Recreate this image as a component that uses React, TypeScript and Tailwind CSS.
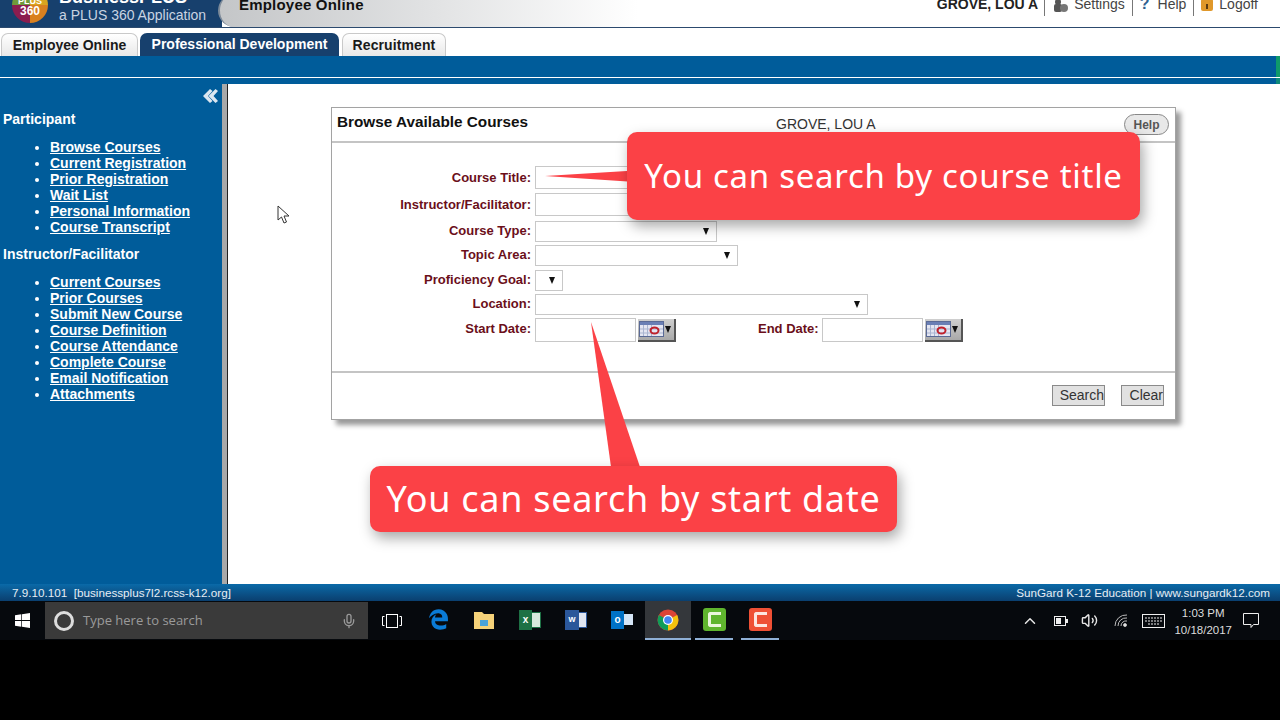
import { FaEdgeLegacy } from "react-icons/fa6";
import { ChevronUp, Mic, Volume2 } from "lucide-react";

const participantLinks = [
  "Browse Courses",
  "Current Registration",
  "Prior Registration",
  "Wait List",
  "Personal Information",
  "Course Transcript",
];

const instructorLinks = [
  "Current Courses",
  "Prior Courses",
  "Submit New Course",
  "Course Definition",
  "Course Attendance",
  "Complete Course",
  "Email Notification",
  "Attachments",
];

function SideList({ items }: { items: string[] }) {
  return (
    <ul className="pl-[50px] list-disc text-[14px] leading-[16px] font-bold text-white">
      {items.map((item) => (
        <li key={item} className="underline">
          {item}
        </li>
      ))}
    </ul>
  );
}

function Label({ text, className = "" }: { text: string; className?: string }) {
  return (
    <span className={`text-[13px] leading-[16px] font-bold text-[#6b0f1a] text-right ${className}`}>
      {text}
    </span>
  );
}

function Row({ label, gap, lift = "pb-[2px]", children }: { label: string; gap: string; lift?: string; children: React.ReactNode }) {
  return (
    <div className={`flex items-center ${gap}`}>
      <Label text={label} className={`w-[199px] mr-[4px] ${lift}`} />
      {children}
    </div>
  );
}

function Arrow() {
  return <span className="w-0 h-0 border-l-[3.5px] border-r-[3.5px] border-t-[7px] border-l-transparent border-r-transparent border-t-[#111]" />;
}

function Select({ width }: { width: string }) {
  return (
    <div className={`${width} h-[21px] border border-[#c8c8c8] bg-white flex items-center justify-end pr-[7px]`}>
      <Arrow />
    </div>
  );
}

function CalendarButton() {
  return (
    <div className="ml-[2px] w-[38px] h-[23px] bg-gradient-to-b from-[#cfcfcf] to-[#a9a9a9] border-r-2 border-b-2 border-[#555] flex items-center pl-[1px] gap-[1px]">
      <svg width="25" height="16" viewBox="0 0 25 16">
        <rect x="0.5" y="0.5" width="24" height="15" fill="#e4e6f2" stroke="#5a6a96" />
        <rect x="1" y="1" width="23" height="3" fill="#6a7fb5" />
        <path d="M4.500 4v11M8.500 4v11M12.500 4v11M1 8h23M1 12h23" stroke="#a9b4d0" />
        <ellipse cx="15.500" cy="9.500" rx="4" ry="3" fill="none" stroke="#c0202a" strokeWidth="2" />
      </svg>
      <Arrow />
    </div>
  );
}

function ExcelIcon() {
  return (
    <div className="relative w-[22px] h-[20px]">
      <div className="absolute right-0 top-[2px] w-[14px] h-[16px] bg-[#d8e8dc] border border-[#1e7145]" />
      <div className="absolute left-0 top-0 w-[13px] h-[20px] bg-[#1e7145] text-white text-[10px] font-bold flex items-center justify-center">x</div>
    </div>
  );
}

function WordIcon() {
  return (
    <div className="relative w-[22px] h-[20px]">
      <div className="absolute right-0 top-[2px] w-[14px] h-[16px] bg-[#dfe6f2] border border-[#2b579a]" />
      <div className="absolute left-0 top-0 w-[14px] h-[20px] bg-[#2b579a] text-white text-[9px] font-bold flex items-center justify-center">w</div>
    </div>
  );
}

function OutlookIcon() {
  return (
    <div className="relative w-[22px] h-[18px]">
      <div className="absolute right-0 top-[3px] w-[13px] h-[11px] bg-[#d5e6f7]" />
      <div className="absolute left-0 top-0 w-[13px] h-[18px] bg-[#0072c6] text-white text-[10px] font-bold flex items-center justify-center">o</div>
    </div>
  );
}

function TaskIcon({ children, active, running }: { children: React.ReactNode; active?: boolean; running?: boolean }) {
  return (
    <div className={`h-[39px] flex items-center justify-center border-b-2 ${active ? "w-[46px] bg-[#34373b]" : running ? "w-[38px] mx-[4px]" : "w-[46px]"} ${running ? "border-[#8fb0d6]" : "border-transparent"}`}>
      {children}
    </div>
  );
}

export default function App() {
  return (
    <div className="relative w-[1280px] h-[720px] overflow-hidden bg-black font-['Liberation_Sans',Arial,sans-serif]">
      {/* top header, cropped by the video frame */}
      <div className="h-[28px] bg-white border-b border-[#2c4a6e] flex overflow-hidden">
        <div className="w-[222px] bg-[#17406d] flex pl-[12px]">
          <svg width="36" height="36" viewBox="0 0 36 36" className="-mt-[13px] shrink-0">
            <path d="M18 0A18 18 0 0 1 36 18H18Z" fill="#d9a520" />
            <path d="M36 18A18 18 0 0 1 18 36V18Z" fill="#d9801f" />
            <path d="M18 36A18 18 0 0 1 0 18H18Z" fill="#8b1d4f" />
            <path d="M0 18A18 18 0 0 1 18 0V18Z" fill="#6f9a3a" />
            <text x="18" y="17" textAnchor="middle" fontSize="9" fontWeight="700" fill="#fff">PLUS</text>
            <text x="18" y="28" textAnchor="middle" fontSize="12" fontWeight="700" fill="#fff">360</text>
          </svg>
          <div className="ml-[11px] -mt-[13px] text-[#c9d4e2]">
            <div className="text-[18px] leading-[20px] font-bold text-white">BusinessPLUS</div>
            <div className="text-[14px] leading-[16px]">a PLUS 360 Application</div>
          </div>
        </div>
        <div className="w-[420px] -ml-[4px] rounded-tl-[20px] rounded-bl-[20px] bg-gradient-to-r from-[#c4c6c8] to-white pl-[19px] -mt-[6px] h-[33px] text-[15px] font-bold tracking-[0.2px] text-[#111] border-l-2 border-[#7d8a99]">
          Employee Online
        </div>
        <div className="flex-1 flex justify-end items-start pr-[22px] -mt-[5px] text-[14px] leading-[18px] text-[#444]">
          <span className="font-bold text-[#222]">GROVE, LOU A</span>
          <span className="ml-[6px] mr-[8px] w-px h-[21px] bg-[#777]" />
          <svg width="15" height="14" viewBox="0 0 15 14" className="mt-[3px] mr-[6px]"><circle cx="5" cy="4" r="3" fill="#555" /><rect x="1" y="6" width="8" height="8" rx="2" fill="#555" /><circle cx="11" cy="10" r="4" fill="#777" /></svg>
          <span>Settings</span>
          <span className="mx-[7px] w-px h-[21px] bg-[#777]" />
          <span className="mr-[8px] text-[16px] font-bold text-[#2f5f8f]">?</span>
          <span>Help</span>
          <span className="ml-[7px] mr-[6px] w-px h-[21px] bg-[#777]" />
          <svg width="14" height="14" viewBox="0 0 14 14" className="mt-[3px] mr-[5px]"><rect x="1" y="1" width="12" height="12" rx="2" fill="#e0982a" /><rect x="6" y="6" width="2" height="5" fill="#5b3a10" /></svg>
          <span>Logoff</span>
        </div>
      </div>

      {/* tabs */}
      <div className="h-[28px] bg-white flex items-end pl-[1px] text-[14px] font-bold">
        <div className="h-[23px] w-[137px] rounded-t-[7px] border border-b-0 border-[#c9c9c9] bg-gradient-to-b from-white to-[#e8e8e8] flex items-center justify-center text-[#1a1a1a]">Employee Online</div>
        <div className="ml-[2px] h-[23px] w-[199px] rounded-t-[7px] bg-[#17406d] flex items-center justify-center text-white">Professional Development</div>
        <div className="ml-[3px] h-[23px] w-[104px] rounded-t-[7px] border border-b-0 border-[#c9c9c9] bg-gradient-to-b from-white to-[#e8e8e8] flex items-center justify-center text-[#1a1a1a] tracking-[0.1px]">Recruitment</div>
      </div>

      {/* blue strip */}
      <div className="h-[28px] bg-[#005c9a] flex flex-col items-end">
        <div className="h-[21px] w-[4px] bg-[#0f9a6a]" />
        <div className="h-px w-full bg-white" />
        <div className="h-[6px] w-[4px] bg-[#0f8a7a]" />
      </div>

      {/* main */}
      <div className="h-[500px] flex bg-white">
        <div className="w-[222px] bg-[#005c9a] text-white">
          <div className="flex justify-end pr-[4px] pt-[5px] h-[24px]">
            <svg width="15" height="14" viewBox="0 0 15 14" fill="#dbe6f0">
              <path d="M7 0 9.500 2 5 7l4.500 5L7 14 0 7Z" />
              <path d="M12.500 0 15 2 10.500 7 15 12 12.500 14 5.500 7Z" />
            </svg>
          </div>
          <div className="mt-[3px] pl-[3px] text-[14px] leading-[16px] font-bold">Participant</div>
          <div className="mt-[12px]">
            <SideList items={participantLinks} />
          </div>
          <div className="mt-[11px] pl-[3px] text-[14px] leading-[16px] font-bold">Instructor/Facilitator</div>
          <div className="mt-[12px]">
            <SideList items={instructorLinks} />
          </div>
        </div>
        <div className="w-[5px] bg-[#a9a9a9]" />
        <div className="w-px bg-[#222]" />
        <div className="flex-1 pl-[103px] pt-[23px]">
          <div className="w-[845px] h-[313px] bg-white border border-[#a3a3a3] shadow-[5px_5px_5px_#999] flex flex-col">
            <div className="h-[35px] border-b-2 border-[#c4c4c4] flex pl-[5px] pt-[3px]">
              <span className="text-[15.3px] font-bold text-[#111]">Browse Available Courses</span>
              <span className="ml-[248px] mt-[3px] text-[14px] text-[#333]">GROVE, LOU A</span>
              <span className="ml-auto mr-[6px] mt-[3px] w-[45px] h-[21px] rounded-full border border-[#888] bg-[#e8e8e8] text-[12px] font-bold text-[#555] flex items-center justify-center">Help</span>
            </div>
            <div className="flex-1 border-b-2 border-[#c4c4c4] pt-[23px]">
              <Row label="Course Title:" gap="mb-[4px]" lift="pb-0">
                <div className="w-[200px] h-[23px] border border-[#c8c8c8]" />
              </Row>
              <Row label="Instructor/Facilitator:" gap="mb-[5px]" lift="pb-0">
                <div className="w-[200px] h-[23px] border border-[#c8c8c8]" />
              </Row>
              <Row label="Course Type:" gap="mb-[3px]">
                <Select width="w-[182px]" />
              </Row>
              <Row label="Topic Area:" gap="mb-[4px]">
                <Select width="w-[203px]" />
              </Row>
              <Row label="Proficiency Goal:" gap="mb-[3px]">
                <Select width="w-[28px]" />
              </Row>
              <Row label="Location:" gap="mb-[3px]">
                <Select width="w-[333px]" />
              </Row>
              <Row label="Start Date:" gap="">
                <div className="w-[101px] h-[24px] border border-[#c8c8c8]" />
                <CalendarButton />
                <Label text="End Date:" className="ml-[82px] mr-[3px] pb-[2px]" />
                <div className="w-[101px] h-[24px] border border-[#c8c8c8]" />
                <CalendarButton />
              </Row>
            </div>
            <div className="h-[46px] flex justify-end items-start pt-[12px] pr-[11px] gap-[16px]">
              <div className="w-[53px] h-[21px] bg-[#e1e1e1] border border-[#8a8a8a] text-[14px] text-[#333] flex items-center justify-end overflow-hidden">Search</div>
              <div className="w-[43px] h-[21px] bg-[#e1e1e1] border border-[#8a8a8a] text-[14px] text-[#333] flex items-center justify-end overflow-hidden">Clear</div>
            </div>
          </div>
        </div>
      </div>

      {/* status bar */}
      <div className="h-[17px] bg-gradient-to-b from-[#0a6aa8] to-[#0a3f6f] flex justify-between items-center pl-[12px] pr-[10px] text-[11.7px] text-[#e6edf4]">
        <span className="whitespace-pre">7.9.10.101  [businessplus7l2.rcss-k12.org]</span>
        <span>SunGard K-12 Education | www.sungardk12.com</span>
      </div>

      {/* windows taskbar */}
      <div className="h-[39px] bg-[#06090d] flex items-center text-white">
        <div className="w-[45px] flex justify-center">
          <svg width="15" height="15" viewBox="0 0 15 15" fill="#fff"><path d="M0 2.200 6.300 1.300v5.800H0ZM7 1.200 15 0v7.100H7ZM0 7.900h6.300v5.800L0 12.800ZM7 7.900h8V15l-8-1.200Z" /></svg>
        </div>
        <div className="w-[323px] h-[37px] bg-[#3a3a3a] flex items-center pl-[9px] pr-[11px]">
          <span className="w-[20px] h-[20px] rounded-full border-[3px] border-[#ddd]" />
          <span className="ml-[9px] flex-1 text-[13px] text-[#9a9a9a] font-['Open_Sans',sans-serif]">Type here to search</span>
          <Mic size={16} color="#999" />
        </div>
        <div className="w-[47px] flex justify-center">
          <svg width="20" height="14" viewBox="0 0 20 14" fill="none" stroke="#fff"><rect x="4.500" y="0.500" width="11" height="13" /><path d="M2.500 2.500h-2v9h2M17.500 2.500h2v9h-2" /></svg>
        </div>
        <TaskIcon><FaEdgeLegacy size={21} color="#0a7bd6" /></TaskIcon>
        <TaskIcon>
          <svg width="20" height="18" viewBox="0 0 20 18"><path d="M0 1h8l2 2h10v15H0Z" fill="#f5d279" /><rect x="6" y="9" width="8" height="6" fill="#4aa3d8" /></svg>
        </TaskIcon>
        <TaskIcon><ExcelIcon /></TaskIcon>
        <TaskIcon><WordIcon /></TaskIcon>
        <TaskIcon><OutlookIcon /></TaskIcon>
        <TaskIcon active running>
          <svg width="22" height="22" viewBox="0 0 22 22">
            <circle cx="11" cy="11" r="10.500" fill="#db4437" />
            <path d="M11 11 20.100 6A10.500 10.500 0 0 1 11 21.500Z" fill="#f4c20d" />
            <path d="M11 11 11 21.500A10.500 10.500 0 0 1 1.900 6Z" fill="#0f9d58" />
            <circle cx="11" cy="11" r="5" fill="#fff" />
            <circle cx="11" cy="11" r="3.800" fill="#4285f4" />
          </svg>
        </TaskIcon>
        <TaskIcon running>
          <div className="w-[23px] h-[23px] rounded-[3px] bg-[#5fb52e] flex items-center justify-center">
            <div className="w-[13px] h-[15px] border-[3px] border-r-0 border-[#eaf6dc] rounded-l-[3px]" />
          </div>
        </TaskIcon>
        <TaskIcon running>
          <div className="w-[23px] h-[23px] rounded-[3px] bg-[#ef5035] flex items-center justify-center">
            <div className="w-[13px] h-[15px] border-[3px] border-r-0 border-[#fde5df] rounded-l-[3px]" />
          </div>
        </TaskIcon>
        <div className="ml-auto flex items-center pr-[21px] text-[#e5e5e5]">
          <ChevronUp size={18} className="mr-[15px]" />
          <svg width="14" height="10" viewBox="0 0 14 10" className="mr-[13px]"><rect x="0.500" y="0.500" width="11" height="9" fill="none" stroke="#eee" /><rect x="2" y="2" width="5" height="6" fill="#eee" /><rect x="12" y="3" width="2" height="4" fill="#eee" /></svg>
          <Volume2 size={17} className="mr-[16px]" />
          <svg width="14" height="13" viewBox="0 0 14 13" fill="none" stroke="#bbb" className="mr-[14px]"><path d="M1 12A11 11 0 0 1 13 1M4 12A8 8 0 0 1 13 4M7 12A5 5 0 0 1 13 7" /><circle cx="11" cy="11" r="1.500" fill="#eee" /></svg>
          <svg width="23" height="14" viewBox="0 0 23 14" fill="none" stroke="#eee" className="mr-[9px]"><rect x="0.500" y="0.500" width="22" height="13" /><path d="M3 4h17M3 7h17M6 10h11" strokeDasharray="2 1" /></svg>
          <div className="pt-[2px] text-[11.5px] leading-[17px] text-center text-[#ddd] mr-[11px]">
            <div>1:03 PM</div>
            <div>10/18/2017</div>
          </div>
          <svg width="16" height="15" viewBox="0 0 16 15" fill="none" stroke="#eee"><path d="M0.500 0.500h15v11h-5l-2.500 3v-3h-7.500Z" /></svg>
        </div>
      </div>

      {/* callouts sit over the form */}
      <svg width="100" height="20" viewBox="0 0 100 20" className="absolute left-[545px] top-[166px]">
        <path d="M0 10 90 4.500V16Z" fill="#fb4146" />
      </svg>
      <div className="absolute left-[627px] top-[132px] w-[513px] h-[88px] rounded-[10px] bg-[#fb4146] shadow-[3px_6px_14px_rgba(0,0,0,0.35)] text-white text-[33px] font-['Noto_Sans',sans-serif] tracking-[0.7px] flex items-center justify-center">
        You can search by course title
      </div>
      <svg width="60" height="150" viewBox="0 0 60 150" className="absolute left-[585px] top-[322px]">
        <path d="M6 0 55 145H26Z" fill="#fb4146" />
      </svg>
      <div className="absolute left-[370px] top-[466px] w-[527px] h-[66px] rounded-[10px] bg-[#fb4146] shadow-[3px_6px_14px_rgba(0,0,0,0.35)] text-white text-[36px] font-['Noto_Sans',sans-serif] tracking-[0.7px] flex items-center justify-center">
        You can search by start date
      </div>

      {/* mouse pointer */}
      <svg width="13" height="19" viewBox="0 0 13 19" className="absolute left-[277px] top-[205px]">
        <path d="M1 1V15L4.500 12 7 18 9.500 17 7 11H12Z" fill="#fff" stroke="#333" />
      </svg>
    </div>
  );
}
